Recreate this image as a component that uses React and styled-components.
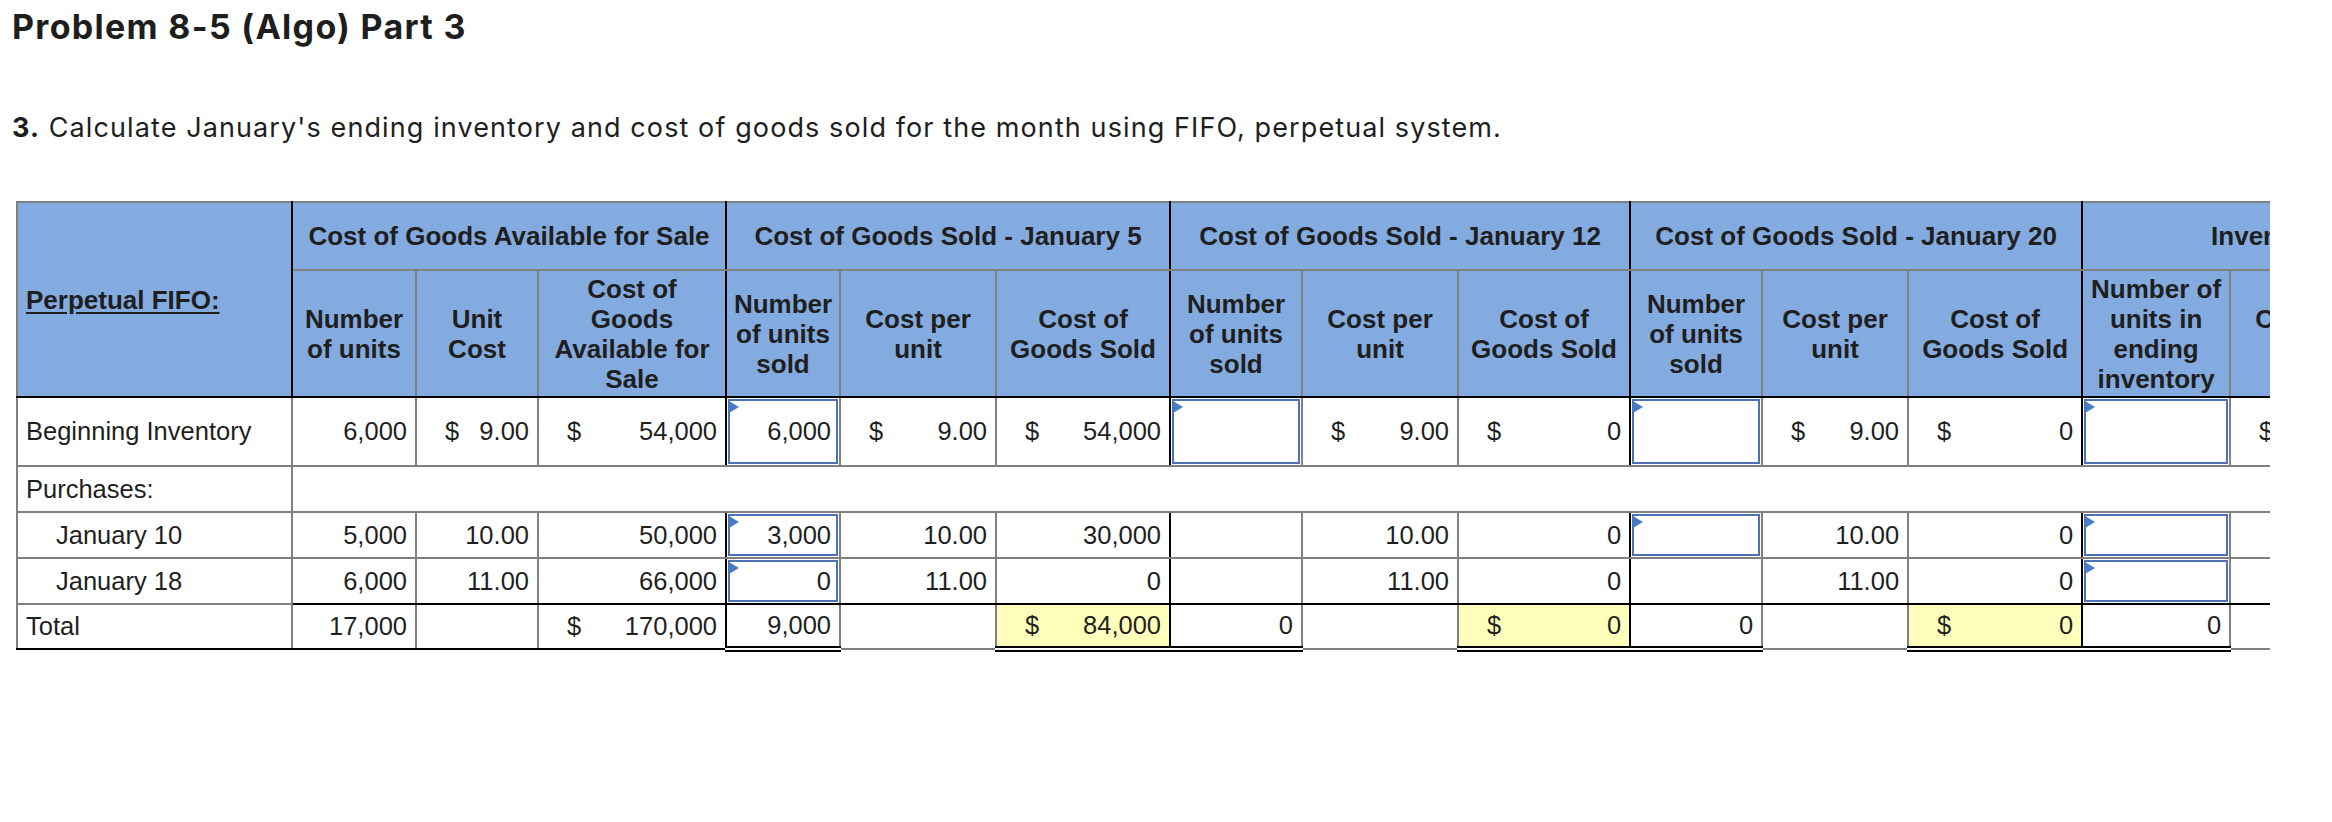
import React from 'react';
import styled, { createGlobalStyle, css } from 'styled-components';

const GlobalStyle = createGlobalStyle`
  body {
    margin: 0;
    background: #ffffff;
  }
`;

const GRID = '#808080';
const HEAD_BG = '#84abe0';
const INPUT_BLUE = '#4a72b4';

const Page = styled.div`
  padding: 7px 0 0 12px;
  font-family: Inter, Lato, sans-serif;
  color: #1e1e1e;
`;

const Title = styled.h1`
  margin: 0;
  font-size: 34px;
  line-height: 40px;
  font-weight: 700;
  letter-spacing: 1.3px;
`;

const Prompt = styled.p`
  margin: 65px 0 0;
  font-size: 27px;
  line-height: 32px;
  font-weight: 400;
  letter-spacing: 1.1px;

  b {
    font-weight: 700;
  }
`;

const TableWrap = styled.div`
  margin: 56px 0 0 3px;
  padding: 1px 0 0 1px;
  width: 2254px;
  overflow: hidden;
`;

const Table = styled.table`
  border-collapse: collapse;
  table-layout: fixed;
  width: ${p => p.$width}px;
  font-family: "Liberation Sans", Arial, sans-serif;
  font-size: 25.5px;
  color: #1f1f1f;
  border-top: 2px solid ${GRID};
  border-left: 2px solid ${GRID};
`;

const Col = styled.col`
  width: ${p => p.$w}px;
`;

const Row = styled.tr`
  height: ${p => p.$h}px;
`;

const HeadCell = styled.th`
  background: ${HEAD_BG};
  font-size: 26px;
  font-weight: 700;
  line-height: 30px;
  padding: 0 6px;
  text-align: center;
  vertical-align: middle;
  border-right: 2px solid ${p => (p.$end ? '#000' : GRID)};
  border-bottom: 2px solid ${p => (p.$bottom === 'black' ? '#000' : GRID)};
`;

const CornerCell = styled(HeadCell)`
  text-align: left;
  padding-left: 8px;

  span {
    text-decoration: underline;
    text-underline-offset: 3px;
  }
`;

const underlines = {
  black: css`border-bottom: 2px solid #000;`,
  double: css`border-bottom: 6px double #000;`,
  grey: css`border-bottom: 2px solid ${GRID};`,
};

const Cell = styled.td`
  position: relative;
  padding: 0 8px;
  white-space: nowrap;
  vertical-align: middle;
  text-align: ${p => (p.$align === 'left' ? 'left' : 'right')};
  padding-left: ${p => (p.$indent ? 38 : 8)}px;
  background: ${p => (p.$hl ? '#ffffbb' : '#ffffff')};
  border-right: 2px solid ${p => (p.$end ? '#000' : GRID)};
  ${p => underlines[p.$under || 'grey']}

  ${p => p.$input && css`
    box-shadow: inset 0 0 0 1px #ffffff, inset 0 0 0 3px ${INPUT_BLUE};

    &::before {
      content: '';
      position: absolute;
      top: 3px;
      left: 2px;
      border-left: 10px solid #4a7bc6;
      border-top: 6.5px solid transparent;
      border-bottom: 6.5px solid transparent;
    }
  `}
`;

const Money = styled.div`
  display: flex;
  justify-content: space-between;
  padding-left: 20px;
`;

const COLS = [
  { w: 275 }, { w: 124 }, { w: 122 }, { w: 188, end: true },
  { w: 114 }, { w: 156 }, { w: 174, end: true },
  { w: 132 }, { w: 156 }, { w: 172, end: true },
  { w: 132 }, { w: 146 }, { w: 174, end: true },
  { w: 148 }, { w: 156 }, { w: 178, end: true },
];

const GROUPS = [
  'Cost of Goods Available for Sale',
  'Cost of Goods Sold - January 5',
  'Cost of Goods Sold - January 12',
  'Cost of Goods Sold - January 20',
  'Inventory Balance',
];

const SUBHEADS = [
  'Number of units', 'Unit Cost', 'Cost of Goods Available for Sale',
  'Number of units sold', 'Cost per unit', 'Cost of Goods Sold',
  'Number of units sold', 'Cost per unit', 'Cost of Goods Sold',
  'Number of units sold', 'Cost per unit', 'Cost of Goods Sold',
  'Number of units in ending inventory', 'Cost per unit', 'Cost of Ending Inventory',
];

// cell shorthands: n = number, m = $ + number, i = input box, _ = blank
const n = v => ({ kind: 'n', v });
const m = v => ({ kind: 'm', v });
const i = (v = '') => ({ kind: 'i', v });
const _ = { kind: 'n', v: '' };

const BODY = [
  {
    label: 'Beginning Inventory', h: 69,
    cells: [n('6,000'), m('9.00'), m('54,000'), i('6,000'), m('9.00'), m('54,000'),
      i(), m('9.00'), m('0'), i(), m('9.00'), m('0'), i(), m('9.00'), m('0')],
  },
  {
    label: 'January 10', indent: true, h: 46,
    cells: [n('5,000'), n('10.00'), n('50,000'), i('3,000'), n('10.00'), n('30,000'),
      _, n('10.00'), n('0'), i(), n('10.00'), n('0'), i(), n('10.00'), n('0')],
  },
  {
    label: 'January 18', indent: true, h: 46, ruleBelow: true,
    cells: [n('6,000'), n('11.00'), n('66,000'), i('0'), n('11.00'), n('0'),
      _, n('11.00'), n('0'), _, n('11.00'), n('0'), i(), n('11.00'), n('0')],
  },
];

const TOTAL = [
  { ...n('17,000'), u: 'black' }, { ..._, u: 'black' }, { ...m('170,000'), u: 'black' },
  { ...n('9,000'), u: 'double' }, { ..._ }, { ...m('84,000'), u: 'double', hl: true },
  { ...n('0'), u: 'double' }, { ..._ }, { ...m('0'), u: 'double', hl: true },
  { ...n('0'), u: 'double' }, { ..._ }, { ...m('0'), u: 'double', hl: true },
  { ...n('0'), u: 'double' }, { ..._ }, { ...m('0'), u: 'double', hl: true },
];

function DataCell({ cell, col, under, hl }) {
  return (
    <Cell $end={col.end} $under={under} $hl={hl} $input={cell.kind === 'i'}>
      {cell.kind === 'm' ? (
        <Money><span>$</span><span>{cell.v}</span></Money>
      ) : cell.v}
    </Cell>
  );
}

function FifoTable() {
  const width = COLS.reduce((s, c) => s + c.w, 0);
  const data = COLS.slice(1);

  return (
    <Table $width={width}>
      <colgroup>
        {COLS.map((c, idx) => <Col key={idx} $w={c.w} />)}
      </colgroup>
      <tbody>
        <Row $h={68}>
          <CornerCell rowSpan={2} $end $bottom="black">
            <span>Perpetual FIFO:</span>
          </CornerCell>
          {GROUPS.map(g => (
            <HeadCell key={g} colSpan={3} $end>{g}</HeadCell>
          ))}
        </Row>
        <Row $h={127}>
          {SUBHEADS.map((t, idx) => (
            <HeadCell key={idx} $end={data[idx].end} $bottom="black">{t}</HeadCell>
          ))}
        </Row>

        <Row $h={BODY[0].h}>
          <Cell $align="left">{BODY[0].label}</Cell>
          {BODY[0].cells.map((c, idx) => <DataCell key={idx} cell={c} col={data[idx]} />)}
        </Row>

        <Row $h={46}>
          <Cell $align="left">Purchases:</Cell>
          <Cell colSpan={15} />
        </Row>

        {BODY.slice(1).map(r => (
          <Row key={r.label} $h={r.h}>
            <Cell $align="left" $indent={r.indent}>{r.label}</Cell>
            {r.cells.map((c, idx) => (
              <DataCell key={idx} cell={c} col={data[idx]} under={r.ruleBelow ? 'black' : 'grey'} />
            ))}
          </Row>
        ))}

        <Row $h={45}>
          <Cell $align="left" $under="black">Total</Cell>
          {TOTAL.map((c, idx) => (
            <DataCell key={idx} cell={c} col={data[idx]} under={c.u} hl={c.hl} />
          ))}
        </Row>
      </tbody>
    </Table>
  );
}

export default function App() {
  return (
    <>
      <GlobalStyle />
      <Page>
        <Title>Problem 8-5 (Algo) Part 3</Title>
        <Prompt>
          <b>3.</b> Calculate January's ending inventory and cost of goods sold for the month using FIFO, perpetual system.
        </Prompt>
        <TableWrap>
          <FifoTable />
        </TableWrap>
      </Page>
    </>
  );
}
